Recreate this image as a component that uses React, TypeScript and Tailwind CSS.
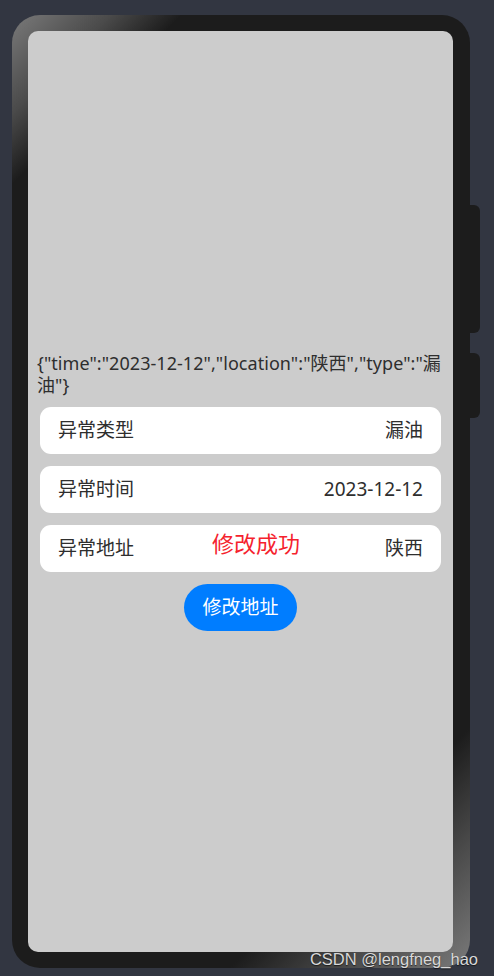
const ROWS = [
  { label: '异常类型', value: '漏油' },
  { label: '异常时间', value: '2023-12-12' },
  { label: '异常地址', value: '陕西', toast: '修改成功' },
]

export default function App() {
  return (
    <div className="relative h-[976px] w-[494px] overflow-hidden bg-[#323641] pl-[12px] pt-[15px] font-['Noto_Sans','Noto_Sans_CJK_SC',sans-serif]">
      <div className="relative flex h-[953px] w-[458px] rounded-[28px] bg-[#1c1c1c] bg-[linear-gradient(135deg,#7a7a7a_0px,#4a4a4a_70px,#1c1c1c_120px,transparent_121px),linear-gradient(315deg,#7a7a7a_0px,#4a4a4a_90px,#1c1c1c_170px,transparent_171px)] pb-[16px] pl-[16px] pr-[17px] pt-[16px]">
        {/* side keys */}
        <div className="absolute left-[458px] top-[190px] h-[128px] w-[10px] rounded-r-[6px] bg-[#1c1c1c]" />
        <div className="absolute left-[458px] top-[338px] h-[65px] w-[10px] rounded-r-[6px] bg-[#1c1c1c]" />

        <div className="flex flex-1 flex-col justify-center rounded-[10px] bg-[#cccccc] text-[#2e2e2e]">
          <p className="whitespace-nowrap px-[9px] text-[18px] leading-[22px] tracking-[0.05px]">
            <span className="block">{'{"time":"2023-12-12","location":"陕西","type":"漏'}</span>
            <span className="block">{'油"}'}</span>
          </p>

          <div className="mt-[11px] flex flex-col gap-[12px] px-[12px]">
            {ROWS.map((row) => (
              <div
                key={row.label}
                className="relative flex h-[47px] items-center justify-between rounded-[11px] bg-white px-[18px] text-[19px]"
              >
                <span>{row.label}</span>
                {row.toast && (
                  <span className="absolute left-[172px] top-[3px] text-[22px] leading-[30px] text-[#f5222d]">
                    {row.toast}
                  </span>
                )}
                <span>{row.value}</span>
              </div>
            ))}
          </div>

          <div className="mt-[12px] flex justify-center">
            <button className="h-[47px] w-[113px] rounded-full bg-[#007dff] text-[19px] text-white">修改地址</button>
          </div>
        </div>
      </div>

      <div className="absolute bottom-[7px] right-[16px] font-['Liberation_Sans',sans-serif] text-[16.5px] leading-[20px] text-[#d8d8d8] [text-shadow:0_1px_1px_rgba(0,0,0,0.6)]">
        CSDN @lengfneg_hao
      </div>
    </div>
  )
}
